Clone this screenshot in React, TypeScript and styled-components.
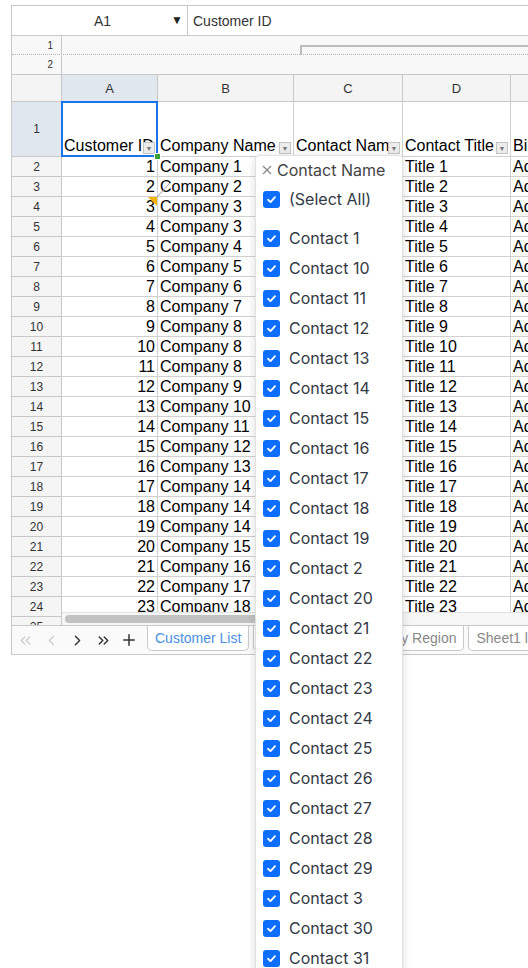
import React from "react";
import styled, { createGlobalStyle } from "styled-components";
import { ChevronsLeft, ChevronLeft, ChevronRight, ChevronsRight, Plus } from "lucide-react";

const Global = createGlobalStyle`
  *, *::before, *::after { box-sizing: border-box; }
  html, body { margin: 0; padding: 0; background: #fff; overflow: hidden; }
  body { font-family: "Liberation Sans", Arial, sans-serif; color: #000; }
`;

const Page = styled.div`
  position: relative;
  height: 968px;
  padding: 5px 0 0 11px;
  overflow: hidden;
`;

const Sheet = styled.div`
  width: 620px;
  border: 1px solid #c8c8c8;
  display: flex;
  flex-direction: column;
`;

const FormulaBar = styled.div`
  display: flex;
  height: 30px;
  border-bottom: 1px solid #c8c8c8;
  background: #fff;
`;

const NameBox = styled.div`
  position: relative;
  width: 176px;
  border-right: 1px solid #c8c8c8;
  display: flex;
  align-items: center;
  justify-content: center;
  padding-left: 6px;
  font-size: 14px;
  color: #333;
`;

const NameArrow = styled.span`
  position: absolute;
  right: 4px;
  top: 7px;
  font-size: 12px;
  color: #222;
`;

const FormulaText = styled.div`
  display: flex;
  align-items: center;
  padding-left: 5px;
  font-size: 14px;
  color: #333;
`;

const OutlineArea = styled.div`
  display: flex;
  flex-direction: column;
  background: #f8f8f8;
  border-bottom: 1px solid #c8c8c8;
`;

const OutlineRow = styled.div<{ $dotted?: boolean }>`
  display: grid;
  grid-template-columns: 50px 1fr;
  height: 19px;
  border-bottom: ${(p) => (p.$dotted ? "1px dotted #b5b5b5" : "none")};
`;

const OutlineNum = styled.div`
  border-right: 1px solid #c8c8c8;
  font-size: 10px;
  color: #333;
  text-align: right;
  padding-right: 8px;
  line-height: 19px;
`;

const OutlinePane = styled.div`
  position: relative;
`;

const Bracket = styled.div`
  margin-left: 238px;
  margin-top: 9px;
  height: 10px;
  border-top: 2px solid #bdbdbd;
  border-left: 2px solid #bdbdbd;
`;

const GridArea = styled.div`
  position: relative;
  height: 550px;
  overflow: hidden;
`;

const COLS = "50px 96px 136px 109px 108px 120px";

const GridRow = styled.div<{ $h: number }>`
  display: grid;
  grid-template-columns: ${COLS};
  height: ${(p) => p.$h}px;
`;

const HeadCell = styled.div<{ $sel?: boolean }>`
  border-right: 1px solid #c8c8c8;
  border-bottom: 1px solid #c8c8c8;
  background: ${(p) => (p.$sel ? "#e0e7ef" : "#f4f4f4")};
  display: flex;
  align-items: center;
  justify-content: center;
  font-size: 13px;
  color: #333;
`;

const RowHead = styled.div<{ $sel?: boolean }>`
  border-right: 1px solid #c8c8c8;
  border-bottom: 1px solid #c8c8c8;
  background: ${(p) => (p.$sel ? "#e0e7ef" : "#f5f5f5")};
  display: flex;
  align-items: center;
  justify-content: center;
  font-size: 12px;
  color: #333;
`;

const Cell = styled.div<{ $right?: boolean }>`
  position: relative;
  border-right: 1px solid #d0d0d0;
  border-bottom: 1px solid #d0d0d0;
  background: #fff;
  font-size: 16px;
  line-height: 19px;
  padding: 0 2px;
  white-space: nowrap;
  overflow: hidden;
  text-align: ${(p) => (p.$right ? "right" : "left")};
`;

const HeaderCell = styled.div<{ $selected?: boolean }>`
  position: relative;
  border-right: 1px solid #d0d0d0;
  border-bottom: 1px solid #d0d0d0;
  background: #fff;
  font-size: 16px;
  line-height: 19px;
  padding: 0 2px 1px;
  white-space: nowrap;
  display: flex;
  align-items: flex-end;
  overflow: ${(p) => (p.$selected ? "visible" : "hidden")};
  z-index: ${(p) => (p.$selected ? 2 : 0)};
`;

const HeaderText = styled.span`
  overflow: hidden;
  display: block;
  max-width: 100%;
`;

const SelBox = styled.div`
  position: absolute;
  left: -1px;
  top: -1px;
  right: -1px;
  bottom: -1px;
  border: 2px solid #1a73e8;
  pointer-events: none;
`;

const FillHandle = styled.div`
  position: absolute;
  right: -4px;
  bottom: -4px;
  width: 7px;
  height: 7px;
  background: #34a234;
  border: 1px solid #fff;
  z-index: 3;
`;

const FilterBtn = styled.div`
  position: absolute;
  right: 2px;
  bottom: 2px;
  width: 12px;
  height: 12px;
  background: #ececec;
  border: 1px solid #c4c4c4;
  display: flex;
  align-items: center;
  justify-content: center;
  font-size: 7px;
  color: #777;
  line-height: 1;
`;

const CommentMark = styled.div`
  position: absolute;
  right: 0;
  top: 0;
  width: 0;
  height: 0;
  border-top: 9px solid #f5b400;
  border-left: 9px solid transparent;
`;

const CommentLine = styled.svg`
  position: absolute;
  left: 144px;
  top: 107px;
  z-index: 3;
`;

const ScrollBar = styled.div`
  position: absolute;
  left: 50px;
  right: 0;
  bottom: 0;
  height: 13px;
  background: #f6f6f6;
  border-top: 1px solid #e2e2e2;
  display: flex;
  align-items: center;
  padding-left: 3px;
`;

const Thumb = styled.div`
  width: 320px;
  height: 8px;
  border-radius: 4px;
  background: #c2c2c2;
`;

const TabBar = styled.div`
  display: flex;
  height: 29px;
  border-top: 1px solid #c8c8c8;
  background: #fafafa;
  align-items: flex-start;
`;

const NavButton = styled.div<{ $dim?: boolean }>`
  width: 26px;
  height: 28px;
  display: flex;
  align-items: center;
  justify-content: center;
  color: ${(p) => (p.$dim ? "#c8c8c8" : "#333")};
`;

const Tabs = styled.div`
  display: flex;
  gap: 4px;
  margin-left: 5px;
`;

const Tab = styled.div<{ $active?: boolean }>`
  height: 25px;
  padding: 0 7px;
  border: 1px solid #c8c8c8;
  border-top: none;
  border-radius: 0 0 5px 5px;
  background: #fff;
  font-size: 14px;
  line-height: 24px;
  white-space: nowrap;
  color: ${(p) => (p.$active ? "#4a8fe2" : "#888")};
`;

const Dropdown = styled.div`
  position: absolute;
  left: 255px;
  top: 155px;
  width: 148px;
  height: 840px;
  background: #fff;
  border: 1px solid #e1e1e1;
  border-radius: 4px;
  box-shadow: 0 2px 10px rgba(0, 0, 0, 0.14);
  font-family: Inter, "Noto Sans", sans-serif;
  z-index: 10;
  overflow: hidden;
`;

const DropHeader = styled.div`
  height: 28px;
  display: flex;
  align-items: center;
  padding-left: 5px;
  gap: 5px;
  font-size: 16px;
  color: #444;
`;

const CloseX = styled.span`
  width: 11px;
  display: flex;
  align-items: center;
  justify-content: center;
  color: #8a8a8a;
`;

const Item = styled.div<{ $gapAfter?: boolean }>`
  height: 30px;
  display: flex;
  align-items: center;
  padding-left: 7px;
  gap: 9px;
  font-size: 16px;
  color: #333a44;
  margin-bottom: ${(p) => (p.$gapAfter ? 9 : 0)}px;
  white-space: nowrap;
`;

const Box = styled.span`
  width: 17px;
  height: 17px;
  border-radius: 3px;
  background: #0d6efd;
  display: flex;
  align-items: center;
  justify-content: center;
  flex: none;
`;

const Check = () => (
  <Box>
    <svg width="11" height="11" viewBox="0 0 12 12">
      <polyline points="2.2,6.3 4.9,8.8 9.8,3.4" fill="none" stroke="#fff" strokeWidth="2" strokeLinecap="round" strokeLinejoin="round" />
    </svg>
  </Box>
);

const companies = [1, 2, 3, 3, 4, 5, 6, 7, 8, 8, 8, 9, 10, 11, 12, 13, 14, 14, 14, 15, 16, 17, 18, 19];

const contacts = [
  "1", "10", "11", "12", "13", "14", "15", "16", "17", "18", "19",
  "2", "20", "21", "22", "23", "24", "25", "26", "27", "28", "29",
  "3", "30", "31", "32",
];

const headers = ["Customer ID", "Company Name", "Contact Name", "Contact Title", "Billing Address"];

export default function App() {
  return (
    <>
      <Global />
      <Page>
        <Sheet>
          <FormulaBar>
            <NameBox>
              A1
              <NameArrow>▼</NameArrow>
            </NameBox>
            <FormulaText>Customer ID</FormulaText>
          </FormulaBar>
          <OutlineArea>
            <OutlineRow $dotted>
              <OutlineNum>1</OutlineNum>
              <OutlinePane>
                <Bracket />
              </OutlinePane>
            </OutlineRow>
            <OutlineRow>
              <OutlineNum>2</OutlineNum>
              <OutlinePane />
            </OutlineRow>
          </OutlineArea>
          <GridArea>
            <GridRow $h={27}>
              <HeadCell />
              <HeadCell $sel>A</HeadCell>
              <HeadCell>B</HeadCell>
              <HeadCell>C</HeadCell>
              <HeadCell>D</HeadCell>
              <HeadCell>E</HeadCell>
            </GridRow>
            <GridRow $h={55}>
              <RowHead $sel>1</RowHead>
              {headers.map((h, i) => (
                <HeaderCell key={h} $selected={i === 0}>
                  <HeaderText>{h}</HeaderText>
                  {i < 4 && <FilterBtn>▼</FilterBtn>}
                  {i === 0 && <SelBox />}
                  {i === 0 && <FillHandle />}
                </HeaderCell>
              ))}
            </GridRow>
            {companies.map((c, i) => (
              <GridRow $h={20} key={i}>
                <RowHead>{i + 2}</RowHead>
                <Cell $right>
                  {i + 1}
                  {i === 2 && <CommentMark />}
                </Cell>
                <Cell>Company {c}</Cell>
                <Cell>Contact {i + 1}</Cell>
                <Cell>Title {i + 1}</Cell>
                <Cell>Address {i + 1}</Cell>
              </GridRow>
            ))}
            <CommentLine width="16" height="16" viewBox="0 0 16 16">
              <line x1="1" y1="15" x2="14" y2="1" stroke="#a0a0a0" strokeWidth="1" />
            </CommentLine>
            <ScrollBar>
              <Thumb />
            </ScrollBar>
          </GridArea>
          <TabBar>
            <NavButton $dim>
              <ChevronsLeft size={17} strokeWidth={1.6} />
            </NavButton>
            <NavButton $dim>
              <ChevronLeft size={17} strokeWidth={1.6} />
            </NavButton>
            <NavButton>
              <ChevronRight size={17} strokeWidth={2} />
            </NavButton>
            <NavButton>
              <ChevronsRight size={17} strokeWidth={2} />
            </NavButton>
            <NavButton>
              <Plus size={18} strokeWidth={2} />
            </NavButton>
            <Tabs>
              <Tab $active>Customer List</Tab>
              <Tab>Order Lines</Tab>
              <Tab>Sales by Region</Tab>
              <Tab>Sheet1 lookup</Tab>
            </Tabs>
          </TabBar>
        </Sheet>
        <Dropdown>
          <DropHeader>
            <CloseX>
              <svg width="10" height="10" viewBox="0 0 10 10">
                <path d="M1 1 L9 9 M9 1 L1 9" stroke="#8a8a8a" strokeWidth="1.3" />
              </svg>
            </CloseX>
            Contact Name
          </DropHeader>
          <Item $gapAfter>
            <Check />
            (Select All)
          </Item>
          {contacts.map((c) => (
            <Item key={c}>
              <Check />
              Contact {c}
            </Item>
          ))}
        </Dropdown>
      </Page>
    </>
  );
}
